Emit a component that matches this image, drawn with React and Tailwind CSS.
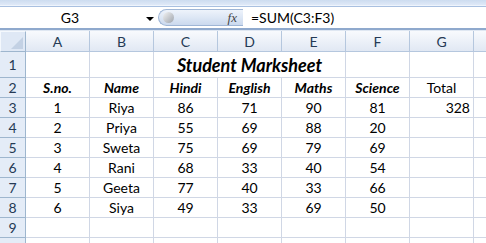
import React from "react";

const cols = ["A", "B", "C", "D", "E", "F", "G", "H"];

const heads = ["S.no.", "Name", "Hindi", "English", "Maths", "Science"];

const rows = [
  ["1", "Riya", "86", "71", "90", "81", "328"],
  ["2", "Priya", "55", "69", "88", "20", ""],
  ["3", "Sweta", "75", "69", "79", "69", ""],
  ["4", "Rani", "68", "33", "40", "54", ""],
  ["5", "Geeta", "77", "40", "33", "66", ""],
  ["6", "Siya", "49", "33", "69", "50", ""],
];

function RowHead({ n, h = "h-[20px]" }) {
  return (
    <div
      className={`${h} w-[26px] shrink-0 flex items-center justify-center bg-[#e4ecf7] border-r border-b border-[#9eb6ce] text-[14px] text-[#253a55]`}
    >
      {n}
    </div>
  );
}

function Cell({ children, className = "" }) {
  return (
    <div
      className={`w-[64px] shrink-0 h-full flex items-center border-r border-b border-[#d0d7e5] ${className}`}
    >
      {children}
    </div>
  );
}

export default function App() {
  return (
    <div
      className="w-[486px] h-[243px] overflow-hidden bg-white flex flex-col text-black"
      style={{ fontFamily: "Lato, 'Noto Sans', sans-serif" }}
    >
      {/* ribbon edge */}
      <div className="h-[6px] shrink-0 bg-gradient-to-b from-[#cddcf0] to-[#dfe9f7] border-b border-[#eef4fc]" />

      {/* formula bar */}
      <div className="h-[24px] shrink-0 flex items-stretch bg-white border-t border-[#a9c0e0] border-b-2 border-b-[#8fa9cd]">
        <div className="w-[158px] shrink-0 relative flex items-center justify-center text-[14px]">
          <span className="mr-[18px]">G3</span>
          <span className="absolute right-[4px] top-[10px] w-0 h-0 border-l-[4px] border-r-[4px] border-t-[4px] border-l-transparent border-r-transparent border-t-black" />
        </div>
        <div className="w-[85px] shrink-0 my-[2px] rounded-l-full bg-gradient-to-b from-[#eef3fb] via-[#dde7f5] to-[#cbd9ee] border border-r-0 border-[#9fb6d6] flex items-center justify-between pl-[4px] pr-[6px]">
          <span className="w-[11px] h-[11px] rounded-full bg-gradient-to-br from-[#f4f4f4] to-[#9ea4ad]" />
          <span
            className="text-[13px] italic text-[#444]"
            style={{ fontFamily: "'Liberation Serif', serif" }}
          >
            fx
          </span>
        </div>
        <div className="flex-1 flex items-center pl-[8px] text-[14px]">
          =SUM(C3:F3)
        </div>
      </div>

      <div className="h-[1px] shrink-0 bg-[#dfe7f2]" />

      {/* column headers */}
      <div className="h-[21px] shrink-0 flex">
        <div className="w-[26px] shrink-0 relative bg-[#dfe8f5] border border-[#f4f8fd] border-r-[#9eb6ce] border-b-[#9eb6ce]">
          <svg className="absolute right-[2px] bottom-[2px]" width="12" height="12">
            <polygon points="12,0 12,12 0,12" fill="#c3d1e4" />
          </svg>
        </div>
        {cols.map((c) => (
          <div
            key={c}
            className="w-[64px] shrink-0 flex items-center justify-center bg-gradient-to-b from-[#f8fafd] to-[#e1e8f3] border-r border-b border-[#b5c7de] text-[14px] text-[#253a55]"
          >
            {c}
          </div>
        ))}
      </div>

      {/* row 1 */}
      <div className="h-[26px] shrink-0 flex">
        <RowHead n="1" h="h-[26px]" />
        <Cell />
        <Cell />
        <div className="w-[192px] shrink-0 h-full flex items-center justify-center border-r border-b border-[#d0d7e5] text-[18px] font-bold italic pt-[2px]">
          Student Marksheet
        </div>
        <Cell />
        <Cell />
        <Cell />
      </div>

      {/* row 2 */}
      <div className="h-[20px] shrink-0 flex">
        <RowHead n="2" />
        {heads.map((h) => (
          <Cell key={h} className="justify-center text-[14px] font-bold italic">
            {h}
          </Cell>
        ))}
        <Cell className="justify-center text-[14px]">Total</Cell>
        <Cell />
      </div>

      {/* data rows */}
      {rows.map((r, i) => (
        <div key={i} className="h-[20px] shrink-0 flex">
          <RowHead n={String(i + 3)} />
          {r.slice(0, 6).map((v, j) => (
            <Cell key={j} className="justify-center text-[14px]">
              {v}
            </Cell>
          ))}
          <Cell className="justify-end pr-[3px] text-[14px]">{r[6]}</Cell>
          <Cell />
        </div>
      ))}

      {/* empty rows */}
      {["9", "10"].map((n) => (
        <div key={n} className="h-[20px] shrink-0 flex">
          <RowHead n={n} />
          {cols.map((c) => (
            <Cell key={c} />
          ))}
        </div>
      ))}
    </div>
  );
}
